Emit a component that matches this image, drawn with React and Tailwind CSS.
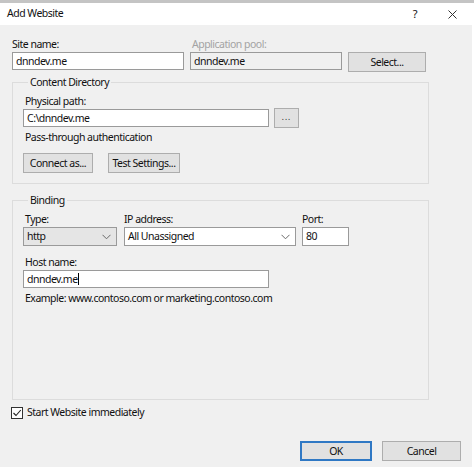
import React from "react";

const font = { fontFamily: '"Noto Sans", "Open Sans", sans-serif' };

function TextBox({ value, className = "", disabled = false, caret = false }) {
  return (
    <div
      className={`h-[18px] border border-[#9a9a9a] flex items-center pl-[3px] text-[10.5px] tracking-[-0.5px] leading-none whitespace-nowrap ${
        disabled ? "bg-[#f0f0f0]" : "bg-white"
      } ${className}`}
    >
      <span>{value}</span>
      {caret && <span className="inline-block w-px h-[12px] bg-black" />}
    </div>
  );
}

function Button({ children, className = "", primary = false }) {
  return (
    <div
      className={`h-[20px] flex items-center justify-center text-[10.5px] tracking-[-0.5px] leading-none bg-[#e1e1e1] whitespace-nowrap border ${
        primary ? "border-[#2f78c4] border-2" : "border-[#adadad]"
      } ${className}`}
    >
      {children}
    </div>
  );
}

function Chevron() {
  return (
    <svg width="9" height="6" viewBox="0 0 9 6" className="mr-[5px]">
      <path d="M0.5 0.8 L4.5 4.8 L8.5 0.8" fill="none" stroke="#6a6a6a" strokeWidth="1" />
    </svg>
  );
}

function Select({ value, className = "", gray = false }) {
  return (
    <div
      className={`h-[19px] border border-[#9a9a9a] flex items-center justify-between pl-[3px] text-[10.5px] tracking-[-0.5px] leading-none whitespace-nowrap ${
        gray ? "bg-[#e5e5e5]" : "bg-white"
      } ${className}`}
    >
      <span>{value}</span>
      <Chevron />
    </div>
  );
}

function Label({ children, className = "" }) {
  return (
    <div className={`h-[16px] flex items-center text-[10.5px] tracking-[-0.5px] leading-none whitespace-nowrap ${className}`}>
      {children}
    </div>
  );
}

export default function App() {
  return (
    <div className="w-[474px] h-[472px] bg-white overflow-hidden text-[#111]" style={font}>
      <div className="h-[3px] bg-[#c4c4c4]" />
      {/* title bar */}
      <div className="h-[22px] flex items-center pl-[7px] text-[10.5px] tracking-[-0.5px]">
        <span className="flex-1">Add Website</span>
        <span className="w-[10px] text-center mr-[28px] text-[11px]">?</span>
        <span className="mr-[17px] flex">
          <svg width="9" height="9" viewBox="0 0 9 9">
            <path d="M0.5 0.5 L8.5 8.5 M8.5 0.5 L0.5 8.5" stroke="#333" strokeWidth="1" />
          </svg>
        </span>
      </div>

      {/* dialog body */}
      <div className="w-[472px] h-[442px] bg-[#f0f0f0] pl-[12px] pt-[11px]">
        {/* site name / app pool */}
        <div className="flex">
          <div className="w-[172px]">
            <Label>Site name:</Label>
            <TextBox value="dnndev.me" />
          </div>
          <div className="w-[152px] ml-[6px]">
            <Label className="text-[#a3a3a3] pl-[2px]">Application pool:</Label>
            <TextBox value="dnndev.me" disabled />
          </div>
          <div className="ml-[6px] pt-[16px]">
            <Button className="w-[78px]">Select...</Button>
          </div>
        </div>

        {/* content directory group */}
        <fieldset className="w-[417px] mt-[2px] border border-[#dcdcdc] pl-[10px] pb-[10px]">
          <legend className="ml-[5px] px-[2px] h-[16px] text-[10.5px] tracking-[-0.5px] leading-[16px]">Content Directory</legend>
          <div className="pt-[3px]">
            <Label className="pl-[2px]">Physical path:</Label>
            <div className="flex items-start">
              <TextBox value="C:\dnndev.me" className="w-[246px]" />
              <Button className="w-[25px] ml-[5px] -mt-[1px]">
                <span className="text-[8px] tracking-[1px] pb-[2px]">...</span>
              </Button>
            </div>
            <Label className="pl-[2px] mt-[1px]">Pass-through authentication</Label>
            <div className="flex mt-[8px]">
              <Button className="w-[70px]">Connect as...</Button>
              <Button className="w-[72px] ml-[15px]">Test Settings...</Button>
            </div>
          </div>
        </fieldset>

        {/* binding group */}
        <fieldset className="w-[417px] mt-[8px] border border-[#dcdcdc] pl-[10px] pb-[93px]">
          <legend className="ml-[5px] px-[2px] h-[16px] text-[10.5px] tracking-[-0.5px] leading-[16px]">Binding</legend>
          <div className="pt-[3px]">
            <div className="flex">
              <div className="w-[94px]">
                <Label className="pl-[2px]">Type:</Label>
                <Select value="http" gray />
              </div>
              <div className="w-[172px] ml-[7px]">
                <Label>IP address:</Label>
                <Select value="All Unassigned" />
              </div>
              <div className="w-[47px] ml-[6px]">
                <Label>Port:</Label>
                <TextBox value="80" className="h-[19px]" />
              </div>
            </div>
            <Label className="pl-[2px] mt-[8px]">Host name:</Label>
            <TextBox value="dnndev.me" caret className="w-[246px]" />
            <Label className="pl-[2px] mt-[2px]">Example: www.contoso.com or marketing.contoso.com</Label>
          </div>
        </fieldset>

        {/* start checkbox */}
        <div className="flex items-center mt-[5px] -ml-[1px] h-[16px]">
          <div className="w-[12px] h-[12px] border border-[#333] bg-white flex items-center justify-center">
            <svg width="10" height="10" viewBox="0 0 10 10">
              <path d="M1.5 5 L4 7.5 L8.8 2" fill="none" stroke="#222" strokeWidth="1.1" />
            </svg>
          </div>
          <span className="ml-[4px] text-[10.5px] tracking-[-0.5px]">Start Website immediately</span>
        </div>

        {/* dialog buttons */}
        <div className="flex justify-end pr-[11px] mt-[20px]">
          <Button primary className="w-[72px]">OK</Button>
          <Button className="w-[79px] ml-[10px]">Cancel</Button>
        </div>
      </div>
    </div>
  );
}
